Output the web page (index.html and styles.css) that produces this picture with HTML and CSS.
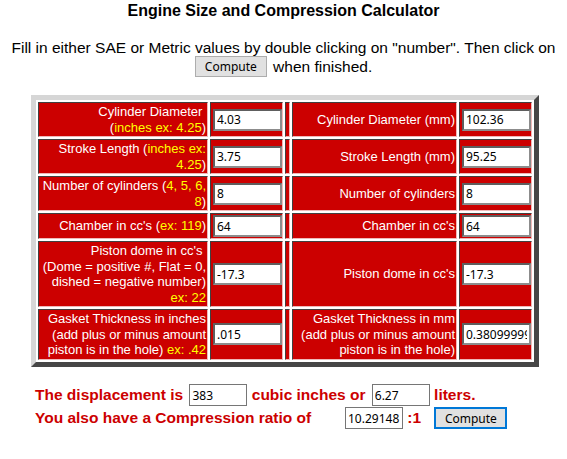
FILE: index.html
```html
<!DOCTYPE html>
<html lang="en">
<head>
  <meta charset="UTF-8">
  <title>Engine Size and Compression Calculator</title>
  <link rel="stylesheet" href="styles.css">
</head>
<body>
  <h1 class="title">Engine Size and Compression Calculator</h1>
  <p class="intro">Fill in either SAE or Metric values by double clicking on "number". Then click on <button type="button" class="btn">Compute</button> when finished.</p>

  <form class="calc">
    <table class="calc-table">
      <tr>
        <td class="label label-sae">Cylinder Diameter&nbsp;<br>(<span class="ex">inches ex: 4.25</span>)</td>
        <td class="field"><input class="num" value="4.03"></td>
        <td class="split"></td>
        <td class="label label-metric">Cylinder Diameter (mm)</td>
        <td class="field"><input class="num" value="102.36"></td>
      </tr>
      <tr>
        <td class="label">Stroke Length (<span class="ex">inches ex:<br>4.25</span>)</td>
        <td class="field"><input class="num" value="3.75"></td>
        <td class="split"></td>
        <td class="label">Stroke Length (mm)</td>
        <td class="field"><input class="num" value="95.25"></td>
      </tr>
      <tr>
        <td class="label">Number of cylinders (<span class="ex">4, 5, 6,<br>8</span>)</td>
        <td class="field"><input class="num" value="8"></td>
        <td class="split"></td>
        <td class="label">Number of cylinders</td>
        <td class="field"><input class="num" value="8"></td>
      </tr>
      <tr>
        <td class="label">Chamber in cc's (<span class="ex">ex: 119</span>)</td>
        <td class="field"><input class="num" value="64"></td>
        <td class="split"></td>
        <td class="label">Chamber in cc's</td>
        <td class="field"><input class="num" value="64"></td>
      </tr>
      <tr>
        <td class="label">Piston dome in cc's&nbsp;<br>(Dome = positive #, Flat = 0,<br>dished = negative number)<br><span class="ex">ex: 22</span></td>
        <td class="field"><input class="num" value="-17.3"></td>
        <td class="split"></td>
        <td class="label">Piston dome in cc's</td>
        <td class="field"><input class="num" value="-17.3"></td>
      </tr>
      <tr>
        <td class="label">Gasket Thickness in inches<br>(add plus or minus amount<br>piston is in the hole) <span class="ex">ex: .42</span></td>
        <td class="field"><input class="num" value=".015"></td>
        <td class="split"></td>
        <td class="label">Gasket Thickness in mm<br>(add plus or minus amount<br>piston is in the hole)</td>
        <td class="field"><input class="num" value="0.380999999999"></td>
      </tr>
    </table>

    <div class="results">
      <div class="result-line">The displacement is <input class="out" value="383"> cubic inches or <input class="out" value="6.27"> liters.</div>
      <div class="result-line"><span class="ratio-label">You also have a Compression ratio of</span><input class="out" value="10.29148"> :1 <button type="button" class="btn btn-focus">Compute</button></div>
    </div>
  </form>
</body>
</html>
```

FILE: styles.css
```css
body {
  margin: 0;
  padding: 0 8px;
  background: #fff;
  color: #000;
  font-family: "Liberation Sans", Arial, sans-serif;
}
.title {
  margin: 2px 0 0;
  font-size: 16px;
  line-height: 18px;
  font-weight: bold;
  text-align: center;
}
.intro {
  margin: 18px 0 0;
  font-size: 15.5px;
  line-height: 19px;
  text-align: center;
}
.btn {
  box-sizing: border-box;
  width: 72px;
  height: 21px;
  margin: -1px 2px 0 0;
  padding: 0;
  vertical-align: top;
  border: 1px solid #adadad;
  background: #e1e1e1;
  color: #000;
  font-family: "Noto Sans", sans-serif;
  font-size: 12px;
}
.calc {
  margin: 0;
}
.calc-table {
  box-sizing: border-box;
  width: 508px;
  margin: 18px 0 0 23px;
  table-layout: fixed;
  border-collapse: separate;
  border-spacing: 2px;
  border: 5px solid;
  border-color: #d6d6d6 #464646 #464646 #d6d6d6;
  background: #fff;
}
.calc-table td {
  box-sizing: border-box;
  padding: 1px;
  border: 1px solid;
  border-color: #404040 #efb8b8 #efb8b8 #404040;
  background: #cc0000;
  color: #fff;
  font-size: 13px;
  line-height: 15.5px;
  text-align: right;
  vertical-align: middle;
}
.calc-table .label-sae {
  width: 170px;
}
.calc-table .label-metric {
  width: 165px;
}
.calc-table .field {
  width: 73px;
  padding: 1px 0 1px 2px;
  text-align: left;
}
.calc-table .split {
  width: 5px;
  padding: 0;
}
.ex {
  color: #ffff00;
}
.num {
  box-sizing: border-box;
  display: block;
  width: 69px;
  height: 22px;
  margin: 0;
  padding: 0 2px;
  border: 2px solid;
  border-color: #5e5e5e #8c8c8c #8c8c8c #5e5e5e;
  background: #fff;
  color: #000;
  font-family: "Noto Sans", sans-serif;
  font-size: 12px;
}
.results {
  margin-top: 16px;
  padding-left: 27px;
}
.result-line {
  height: 23px;
  line-height: 23px;
  color: #cc0000;
  font-size: 15.5px;
  font-weight: bold;
  white-space: nowrap;
}
.ratio-label {
  display: inline-block;
  width: 310px;
}
.out {
  box-sizing: border-box;
  width: 58px;
  height: 22px;
  margin: 0 0 0 2px;
  padding: 0 2px;
  vertical-align: middle;
  border: 1px solid #767676;
  background: #fff;
  color: #000;
  font-family: "Noto Sans", sans-serif;
  font-size: 12px;
}
.ratio-label + .out {
  margin-left: 0;
}
.btn-focus {
  width: 73px;
  height: 22px;
  margin: 0 0 0 9px;
  vertical-align: middle;
  border: 2px solid #0078d7;
}
```
